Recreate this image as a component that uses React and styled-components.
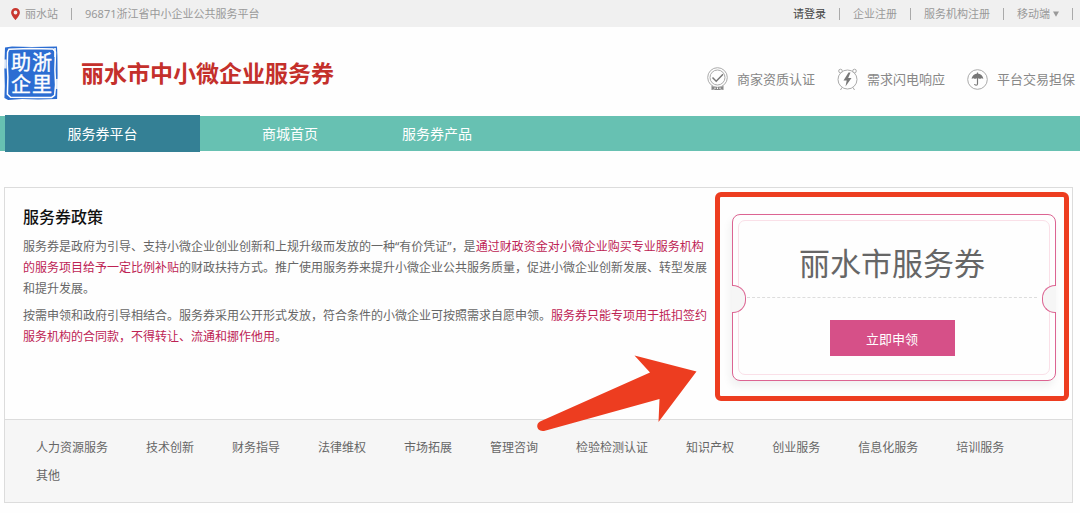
import React from 'react'
import styled, { createGlobalStyle } from 'styled-components'

const accountLinks = ['企业注册', '服务机构注册']

const categories = [
  '人力资源服务',
  '技术创新',
  '财务指导',
  '法律维权',
  '市场拓展',
  '管理咨询',
  '检验检测认证',
  '知识产权',
  '创业服务',
  '信息化服务',
  '培训服务',
  '其他',
]

const PinIcon = () => (
  <svg width='9' height='12' viewBox='0 0 9 12' aria-hidden='true'>
    <path
      fillRule='evenodd'
      fill='#c9372f'
      d='M4.5 0A4.4 4.4 0 0 0 .1 4.4C.1 7.3 4.5 12 4.5 12S8.9 7.3 8.9 4.4A4.4 4.4 0 0 0 4.5 0zm0 2.6a1.9 1.9 0 1 1 0 3.8 1.9 1.9 0 0 1 0-3.8z'
    />
  </svg>
)

const CaretIcon = () => (
  <svg width='6' height='6' viewBox='0 0 6 6' aria-hidden='true'>
    <path d='M0 .5h6L3 5.8z' fill='#999' />
  </svg>
)

const SealLogo = () => (
  <svg width='54' height='54' viewBox='0 0 54 54' role='img' aria-label='浙里助企'>
    <path
      d='M1 1.5 8 .5l20 .6L53 .4l.4 9 .2 20-.5 23.6-19 .6-16-.5-14 .8L.4 52 .8 40 .3 22z'
      fill='#2c6dd2'
    />
    <path
      d='M5 3.2 26 2.4l23 .5 2.500 3-.6 18 .7 15-1 10.500-3 2-20 .2-21-.4-3.200-3 .5-17-.6-13 .3-12z'
      fill='none'
      stroke='#fff'
      strokeWidth='1.500'
    />
    <path d='M0 13.500h2.500v9H0zM51.500 33H54v10h-2.500zM50 2h2v9h-2z' fill='#fff' opacity='.8' />
    <g fill='#fff' stroke='#fff' strokeWidth='.4' fontSize='20' textAnchor='middle'>
      <text x='17' y='24'>助</text>
      <text x='38' y='24'>浙</text>
      <text x='17' y='46'>企</text>
      <text x='38' y='46'>里</text>
    </g>
  </svg>
)

const MedalIcon = () => (
  <svg width='21' height='24' viewBox='0 0 21 24' fill='none' stroke='#aaa' aria-hidden='true'>
    <circle cx='10.500' cy='10.500' r='9.800' />
    <circle cx='10.500' cy='10.500' r='7.500' />
    <path d='m5.500 10.500 3.700 3.700L16 7.200' stroke='#777' strokeWidth='1.500' />
    <path d='M4.500 18.800 7 20h7l2.500-1.200V23l-2.500-.6-1 .6h-5l-1-.6-2.500.6z' fill='#888' stroke='none' />
    <path d='M8 22v-1.500M10.500 22v-1.500M13 22v-1.500' stroke='#fefefe' />
  </svg>
)

const ClockIcon = () => (
  <svg width='21' height='24' viewBox='0 0 21 24' fill='none' stroke='#aaa' aria-hidden='true'>
    <circle cx='10.500' cy='12.500' r='9.500' />
    <circle cx='3.500' cy='4' r='1.800' fill='#fefefe' />
    <circle cx='17.500' cy='4' r='1.800' fill='#fefefe' />
    <path d='M5 20.500 3.500 23M16 20.500l1.500 2.500' />
    <path d='M11.500 5.500 6.500 13.500h3.200L8.500 19.500l6-8.500h-3.300l2.300-5.500z' fill='#777' stroke='none' />
  </svg>
)

const UmbrellaIcon = () => (
  <svg width='21' height='24' viewBox='0 0 21 24' fill='none' stroke='#aaa' aria-hidden='true'>
    <circle cx='10.500' cy='12.500' r='9.800' />
    <path
      d='M10.500 5.500v1c3 .1 5.500 2.300 5.800 5.500-1-1-2.400-1-3.200 0-.6-.6-1.500-.8-2.600-.8s-2 .2-2.600.8c-.8-1-2.200-1-3.200 0 .3-3.200 2.800-5.400 5.800-5.500z'
      fill='#777'
      stroke='none'
    />
    <path d='M10.500 5.500v11.200c0 2-2.800 2-2.800.2' stroke='#777' strokeWidth='1.200' />
  </svg>
)

const features = [
  { text: '商家资质认证', icon: <MedalIcon /> },
  { text: '需求闪电响应', icon: <ClockIcon /> },
  { text: '平台交易担保', icon: <UmbrellaIcon /> },
]

const App = () => {
  return (
    <Page lang='zh-CN'>
      <GlobalStyle />
      <TopBar>
        <TopGroup>
          <Station href='#station'>
            <PinIcon />
            丽水站
          </Station>
          <Divider />
          <TopLink href='#platform'>96871浙江省中小企业公共服务平台</TopLink>
        </TopGroup>
        <TopGroup>
          <TopLink href='#login' $strong>
            请登录
          </TopLink>
          <Divider />
          {accountLinks.map((text) => (
            <React.Fragment key={text}>
              <TopLink href='#register'>{text}</TopLink>
              <Divider />
            </React.Fragment>
          ))}
          <TopLink href='#mobile'>
            移动端
            <CaretIcon />
          </TopLink>
          <Divider />
        </TopGroup>
      </TopBar>

      <Header>
        <Brand>
          <SealLogo />
          <h1>丽水市中小微企业服务券</h1>
        </Brand>
        <Features>
          {features.map(({ text, icon }) => (
            <li key={text}>
              {icon}
              {text}
            </li>
          ))}
        </Features>
      </Header>

      <Nav>
        <NavLink href='#voucher' $active>
          服务券平台
        </NavLink>
        <NavLink href='#mall'>商城首页</NavLink>
        <NavLink href='#products'>服务券产品</NavLink>
      </Nav>

      <Panel>
        <PanelBody>
          <Policy>
            <h2>服务券政策</h2>
            <p>
              服务券是政府为引导、支持小微企业创业创新和上规升级而发放的一种“有价凭证”，是
              <em>通过财政资金对小微企业购买专业服务机构的服务项目给予一定比例补贴</em>
              的财政扶持方式。推广使用服务券来提升小微企业公共服务质量，促进小微企业创新发展、转型发展和提升发展。
            </p>
            <p>
              按需申领和政府引导相结合。服务券采用公开形式发放，符合条件的小微企业可按照需求自愿申领。
              <em>服务券只能专项用于抵扣签约服务机构的合同款，不得转让、流通和挪作他用</em>。
            </p>
          </Policy>
          <Highlight>
            <Arrow viewBox='0 0 160 77' aria-hidden='true'>
              <path
                d='M159.500 16.500 97.500.5l15.500 17L3 66.500c-5 3-3 10.500 4 9.500l115.500-32-1 23z'
                fill='#ed3d20'
              />
            </Arrow>
            <Ticket>
              <h3>丽水市服务券</h3>
              <Perforation />
              <ClaimButton type='button'>立即申领</ClaimButton>
            </Ticket>
          </Highlight>
        </PanelBody>
        <Categories>
          {categories.map((name) => (
            <a href='#category' key={name}>
              {name}
            </a>
          ))}
        </Categories>
      </Panel>
    </Page>
  )
}

const GlobalStyle = createGlobalStyle`
  * {
    box-sizing: border-box;
    margin: 0;
    padding: 0;
  }
  body {
    background: #fefefe;
    font-family: 'Noto Sans', 'Noto Sans CJK SC', sans-serif;
    font-size: 12px;
    color: #666;
  }
  a {
    color: inherit;
    text-decoration: none;
  }
  svg {
    flex-shrink: 0;
  }
`

const Page = styled.main`
  padding-bottom: 8px;
`

const TopBar = styled.div`
  display: flex;
  justify-content: space-between;
  height: 27px;
  padding: 0 7px 0 11px;
  background: #f0f0f0;
`

const TopGroup = styled.div`
  display: flex;
  align-items: center;
  gap: 13px;
`

const TopLink = styled.a`
  display: flex;
  align-items: center;
  gap: 3px;
  font-size: 11px;
  line-height: 16px;
  color: ${({ $strong }) => ($strong ? '#444' : '#999')};
`

const Station = styled(TopLink)`
  gap: 5px;
`

const Divider = styled.span`
  width: 1px;
  height: 12px;
  background: #aaa;
`

const Header = styled.header`
  display: flex;
  justify-content: space-between;
  align-items: center;
  height: 89px;
  padding: 3px 5px 0 4px;
`

const Brand = styled.div`
  display: flex;
  align-items: center;
  gap: 23px;
  h1 {
    font-size: 23px;
    line-height: 32px;
    font-weight: 700;
    color: #c4302b;
  }
`

const Features = styled.ul`
  display: flex;
  gap: 22px;
  margin-top: 12px;
  list-style: none;
  li {
    display: flex;
    align-items: center;
    gap: 9px;
    font-size: 13px;
    line-height: 20px;
    color: #888;
  }
`

const Nav = styled.nav`
  display: flex;
  height: 35px;
  padding-left: 5px;
  background: #67c1b2;
`

const NavLink = styled.a`
  display: flex;
  align-items: center;
  justify-content: center;
  padding: 0 42px 2px;
  font-size: 14px;
  color: #fff;
  ${({ $active }) =>
    $active &&
    `
    width: 195px;
    margin-right: 20px;
    background: #348095;
    box-shadow: 0 1px 0 #348095, 0 -1px 0 #348095;
  `}
`

const Panel = styled.section`
  margin: 36px 7px 0 4px;
  border: 1px solid #dcdcdc;
`

const PanelBody = styled.div`
  display: flex;
  align-items: flex-start;
  padding: 4px 3px 18px 18px;
`

const Policy = styled.article`
  flex: 1;
  padding: 13px 4px 0 0;
  h2 {
    margin-bottom: 7px;
    font-size: 16px;
    line-height: 24px;
    font-weight: 500;
    color: #111;
  }
  p {
    margin-bottom: 6px;
    line-height: 21px;
  }
  em {
    font-style: normal;
    color: #bd2354;
  }
`

const Highlight = styled.div`
  position: relative;
  width: 354px;
  padding: 17px 8px 15px 12px;
  border: 5px solid #ed3d20;
  border-radius: 6px;
`

const Arrow = styled.svg`
  position: absolute;
  right: calc(100% + 23px);
  top: 158px;
  width: 160px;
  height: 77px;
`

const Ticket = styled.div`
  position: relative;
  display: flex;
  flex-direction: column;
  align-items: center;
  padding: 24px 18px 24px 14px;
  border: 1px solid #dc6492;
  border-radius: 8px;
  background: #fefefe;
  box-shadow: -2px 5px 8px rgba(0, 0, 0, 0.06);
  &::before {
    content: '';
    position: absolute;
    inset: 5px;
    border: 1px solid #fae0e8;
    border-radius: 7px;
  }
  h3 {
    font-size: 31px;
    line-height: 48px;
    font-weight: 400;
    color: #666;
  }
`

const Perforation = styled.div`
  align-self: stretch;
  margin: 10px 0 22px;
  border-top: 1px dashed #ddd;
  &::before,
  &::after {
    content: '';
    position: absolute;
    top: 70px;
    width: 13px;
    height: 26px;
    border: 1px solid #dc6492;
    background: #f6f6f6;
  }
  &::before {
    left: -1px;
    border-left: 0;
    border-radius: 0 13px 13px 0;
  }
  &::after {
    right: -1px;
    border-right: 0;
    border-radius: 13px 0 0 13px;
  }
`

const ClaimButton = styled.button`
  position: relative;
  width: 125px;
  height: 36px;
  border: 0;
  background: #d65088;
  color: #fff;
  font-family: inherit;
  font-size: 13px;
  cursor: pointer;
`

const Categories = styled.nav`
  display: flex;
  flex-wrap: wrap;
  column-gap: 38px;
  padding: 14px 31px 12px;
  border-top: 1px solid #dcdcdc;
  background: #f6f6f6;
  a {
    line-height: 28px;
  }
`

export default App
